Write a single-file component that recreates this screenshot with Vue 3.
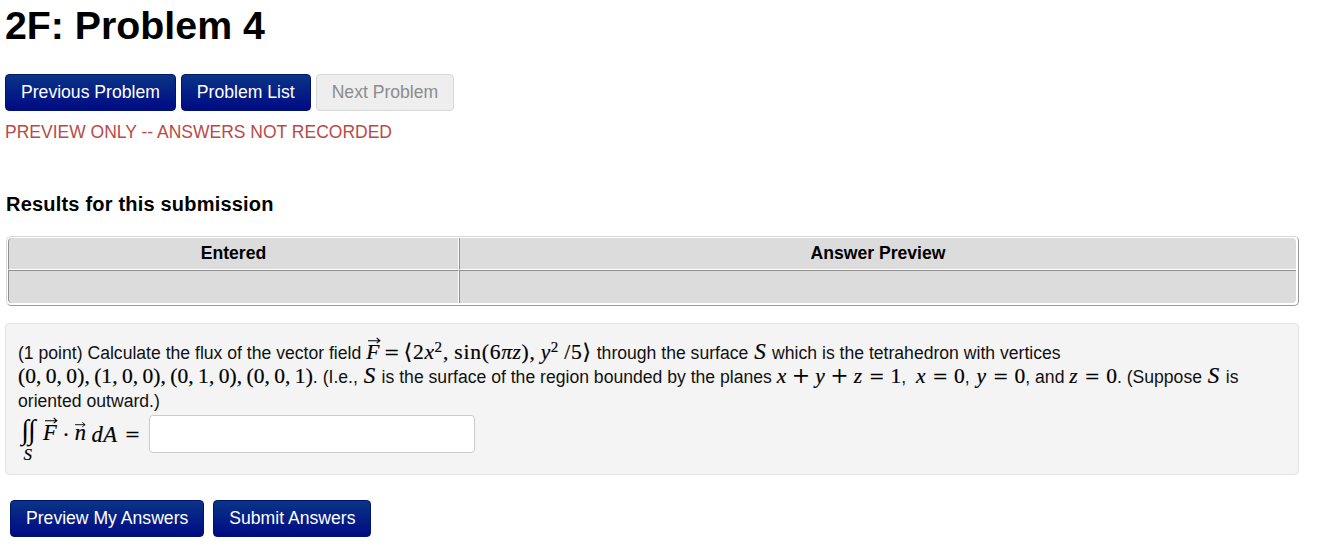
<script setup>
const navButtons = [
  { label: 'Previous Problem', disabled: false },
  { label: 'Problem List', disabled: false },
  { label: 'Next Problem', disabled: true }
]
const submitButtons = ['Preview My Answers', 'Submit Answers']
</script>

<template>
  <div class="page">
    <h1 class="title">2F: Problem 4</h1>

    <div class="nav">
      <a
        v-for="btn in navButtons"
        :key="btn.label"
        class="btn"
        :class="{ disabled: btn.disabled }"
      >{{ btn.label }}</a>
    </div>
    <div class="preview-note">PREVIEW ONLY -- ANSWERS NOT RECORDED</div>

    <h2 class="results-title">Results for this submission</h2>

    <table class="results">
      <tbody>
        <tr>
          <th class="col-entered">Entered</th>
          <th>Answer Preview</th>
        </tr>
        <tr class="empty">
          <td></td>
          <td></td>
        </tr>
      </tbody>
    </table>

    <div class="well">
      <div class="line">
        (1 point) Calculate the flux of the vector field
        <span class="math wide"><span class="vec"><i>F</i><svg class="arrow" viewBox="0 0 12 6"><path d="M0 3.2H11M8 .6L11 3.2L8 5.4" /></svg></span><span class="op">=</span>⟨2<i>x</i><sup>2</sup>,&#8201;sin(6<i>πz</i>),&#8201;<i>y</i><sup>2</sup>&#8201;/5⟩</span>
        through the surface <span class="math s"><i>S</i></span> which is the tetrahedron with vertices
      </div>
      <div class="line second">
        <span class="math tuple">(0,&#8201;0,&#8201;0),&#8201;(1,&#8201;0,&#8201;0),&#8201;(0,&#8201;1,&#8201;0),&#8201;(0,&#8201;0,&#8201;1)</span>. (I.e., <span class="math s"><i>S</i></span> is the surface of the region bounded by the planes
        <span class="math"><i>x</i><span class="op plus">+</span><i>y</i><span class="op plus">+</span><i>z</i><span class="op">=</span>1</span>, <span class="math gap-lg"><i>x</i><span class="op">=</span>0</span>, <span class="math gap-sm"><i>y</i><span class="op">=</span>0</span>, and <span class="math"><i>z</i><span class="op">=</span>0</span>. (Suppose <span class="math s"><i>S</i></span> is
      </div>
      <div class="line plain">oriented outward.)</div>
      <div class="answer-row">
        <span class="math integral">
          <span class="int-sign"><span class="int-glyph">∫∫</span><i class="int-sub">S</i></span>
          <span class="vec"><i>F</i><svg class="arrow" viewBox="0 0 12 6"><path d="M0 3.2H11M8 .6L11 3.2L8 5.4" /></svg></span>
          <span>·</span>
          <span class="vec"><i>n</i><svg class="arrow small" viewBox="0 0 12 6"><path d="M0 3.2H11M8 .6L11 3.2L8 5.4" /></svg></span>
          <i>dA</i>
          <span class="op last">=</span>
        </span>
        <input class="answer" type="text" />
      </div>
    </div>

    <div class="submit-row">
      <a v-for="label in submitButtons" :key="label" class="btn">{{ label }}</a>
    </div>
  </div>
</template>

<style scoped>
.page {
  width: 1320px;
  height: 546px;
  overflow: hidden;
  font-family: "Liberation Sans", Arial, sans-serif;
  color: #000;
  box-sizing: border-box;
  padding: 0 21px 0 5px;
}
.title {
  margin: 0;
  padding-top: 3px;
  font-size: 39.3px;
  line-height: 44px;
  font-weight: 700;
}
.nav {
  display: flex;
  gap: 5px;
  margin-top: 27px;
}
.btn {
  display: block;
  box-sizing: border-box;
  height: 37px;
  line-height: 35px;
  padding: 0 15px;
  font-size: 17.6px;
  color: #fff;
  background: linear-gradient(#0a3486, #000a84);
  border: 1px solid #00146e;
  border-radius: 4px;
  white-space: nowrap;
}
.btn.disabled {
  color: #8c8c8c;
  background: #eeeeee;
  border-color: #d8d8d8;
}
.preview-note {
  margin-top: 10px;
  font-size: 17.5px;
  line-height: 22px;
  color: #b94a48;
}
.results-title {
  margin: 49px 0 0 1px;
  font-size: 20px;
  line-height: 24px;
  letter-spacing: 0.2px;
  font-weight: 700;
}
.results {
  display: table;
  width: 1293px;
  margin: 20px 0 0 1px;
  table-layout: fixed;
  border-collapse: separate;
  border-spacing: 0;
  border: 1px solid #d8d8d8;
  border-right-color: #999;
  border-bottom-color: #999;
  border-radius: 5px;
  padding: 1px 2px 2px 1px;
  background: #fff;
}
.results th,
.results td {
  height: 31px;
  padding: 0;
  background: #dcdcdc;
  font-size: 17.6px;
  font-weight: 700;
  text-align: center;
}
.results tr > :first-child {
  border-left: 1px solid #8f8f8f;
  border-right: 1px solid #fff;
}
.results tr > :last-child {
  border-left: 1px solid #8f8f8f;
}
.results th {
  border-bottom: 1px solid #fff;
}
.results .empty td {
  height: 32px;
  border-top: 1px solid #8f8f8f;
}
.results tr:first-child > :first-child {
  border-top-left-radius: 4px;
}
.results tr:first-child > :last-child {
  border-top-right-radius: 4px;
}
.results .empty > :first-child {
  border-bottom-left-radius: 4px;
}
.results .empty > :last-child {
  border-bottom-right-radius: 4px;
}
.col-entered {
  width: 449px;
}
.well {
  box-sizing: border-box;
  width: 1294px;
  height: 152px;
  margin-top: 17px;
  padding: 16px 12px 0;
  background: #f4f4f4;
  border: 1px solid #e4e4e4;
  border-radius: 4px;
  font-size: 17.6px;
  color: #111;
}
.line {
  height: 24px;
  line-height: 24px;
  white-space: nowrap;
}
.line.plain {
  line-height: 26px;
}
.math {
  font-family: "Liberation Serif", "DejaVu Serif", serif;
  font-size: 21.5px;
  color: #000;
  -webkit-text-stroke: 0.2px #000;
}
.math i {
  letter-spacing: 0.5px;
}
.math.wide {
  letter-spacing: 0.82px;
}
.math.tuple {
  letter-spacing: 0.05px;
}
.math.s {
  font-size: 23px;
  margin: 0 1px;
}
.math.gap-lg {
  margin-left: 5px;
}
.math.gap-sm {
  margin-left: 2px;
}
.math sup {
  font-size: 15px;
  line-height: 0;
  vertical-align: 7px;
}
.op {
  font-family: "DejaVu Serif", serif;
  font-size: 19px;
  line-height: 1;
  margin: 0 4px;
  letter-spacing: 0;
  -webkit-text-stroke: 0;
}
.second .op {
  margin: 0 6px;
}
.second .op.plus {
  font-size: 22px;
  margin: 0 5px;
}
.op.last {
  margin: 3px 0 0 2px;
}
.vec {
  position: relative;
  display: inline-block;
  line-height: 1;
}
.arrow {
  position: absolute;
  left: 2px;
  top: -5px;
  width: 13px;
  height: 7px;
  fill: none;
  stroke: #000;
  stroke-width: 1;
}
.arrow.small {
  left: 0;
  top: -1px;
  width: 11px;
}
.answer-row {
  display: flex;
  align-items: flex-start;
  gap: 9px;
  margin-top: 3px;
}
.integral {
  display: inline-flex;
  align-items: flex-start;
  gap: 5px;
  padding-top: 7px;
  font-size: 22.5px;
}
.int-sign {
  display: inline-flex;
  flex-direction: column;
  align-items: center;
  width: 20px;
  margin-top: -6px;
}
.int-glyph {
  font-size: 28px;
  line-height: 28px;
  letter-spacing: -1px;
  font-style: italic;
  -webkit-text-stroke: 0;
}
.int-sub {
  font-size: 17px;
  line-height: 14px;
  margin-top: 4px;
}
.answer {
  box-sizing: border-box;
  width: 326px;
  height: 38px;
  background: #fff;
  border: 1px solid #cccccc;
  border-radius: 4px;
  outline: none;
}
.submit-row {
  display: flex;
  gap: 9px;
  margin: 25px 0 0 5px;
}
</style>

<style>
html,
body {
  margin: 0;
  background: #fff;
}
</style>
